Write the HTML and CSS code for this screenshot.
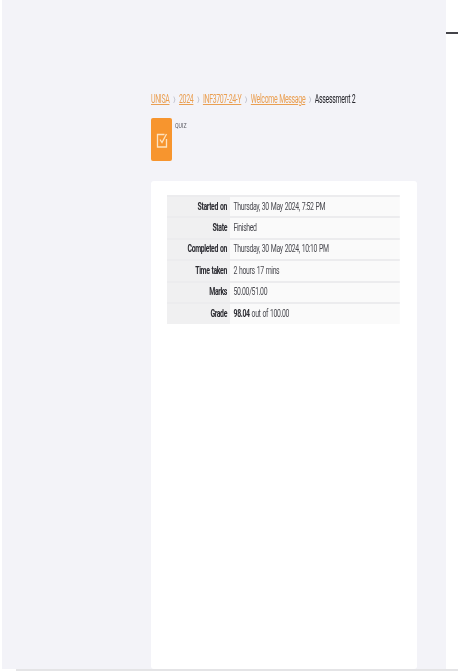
FILE: index.html
```html
<!DOCTYPE html>
<html lang="en">
<head>
    <meta charset="UTF-8">
    <meta name="viewport" content="width=device-width, initial-scale=1.0">
    <title>Assessment 2</title>
    <link rel="stylesheet" href="styles.css">
</head>
<body>
    <div class="shell">
        <div class="page">
            <nav class="breadcrumb">
                <a href="#">UNISA</a>
                <span class="sep">&#8250;</span>
                <a href="#">2024</a>
                <span class="sep">&#8250;</span>
                <a href="#">INF3707-24-Y</a>
                <span class="sep">&#8250;</span>
                <a href="#">Welcome Message</a>
                <span class="sep">&#8250;</span>
                <span class="current">Assessment 2</span>
            </nav>
            <div class="heading">
                <div class="quiz-icon">
                    <svg width="14" height="18" viewBox="0 0 14 18" fill="none" stroke="#fde3c0" stroke-width="1.3">
                        <path d="M11.5 8V16H2.5V3.5H9.5"/>
                        <path d="M5 8.5L7 11.5L11.5 3"/>
                    </svg>
                </div>
                <span class="quiz-label">QUIZ</span>
            </div>
            <div class="card">
                <table class="summary">
                    <tr><th>Started on</th><td>Thursday, 30 May 2024, 7:52 PM</td></tr>
                    <tr><th>State</th><td>Finished</td></tr>
                    <tr><th>Completed on</th><td>Thursday, 30 May 2024, 10:10 PM</td></tr>
                    <tr><th>Time taken</th><td>2 hours 17 mins</td></tr>
                    <tr><th>Marks</th><td>50.00/51.00</td></tr>
                    <tr><th>Grade</th><td><b>98.04</b> out of 100.00</td></tr>
                </table>
            </div>
        </div>
        <div class="side">
            <div class="dash"></div>
        </div>
    </div>
    <div class="bottom-bar"></div>
</body>
</html>
```

FILE: styles.css
```css
html, body {
    height: 100%;
}
body {
    margin: 0;
    background: white;
    font-family: Roboto, sans-serif;
    color: #33333a;
    display: flex;
    flex-direction: column;
    overflow: hidden;
}
.shell {
    flex: 1;
    display: flex;
    min-height: 0;
}
.page {
    width: 444px;
    margin-left: 2px;
    padding: 91px 29px 0 149px;
    box-sizing: border-box;
    background: #f3f3f8;
    display: flex;
    flex-direction: column;
}
.side {
    flex: 1;
    padding-top: 32px;
}
.dash {
    width: 12px;
    height: 1.5px;
    background: #44444a;
}
/* the text in the shot is squeezed sideways, so whole blocks get a scaleX */
.breadcrumb {
    display: flex;
    align-items: center;
    gap: 6.1px;
    height: 15px;
    font-size: 12px;
    letter-spacing: -0.55px;
    word-spacing: 0.5px;
    white-space: nowrap;
    transform: scaleX(0.58);
    transform-origin: left;
    filter: blur(0.3px);
}
.breadcrumb a {
    color: #ea9f52;
}
.breadcrumb .sep {
    color: #b9bcc8;
    font-size: 16px;
}
.breadcrumb .current {
    color: #26262c;
}
.heading {
    display: flex;
    gap: 3px;
    margin-top: 12px;
}
.quiz-icon {
    width: 21px;
    height: 43px;
    background: #f7952e;
    border-radius: 2px;
    display: flex;
    align-items: center;
    justify-content: center;
}
.quiz-label {
    font-size: 7px;
    color: #5a5a62;
    margin-top: 4px;
    transform: scaleX(0.75);
    transform-origin: left top;
}
.card {
    flex: 1;
    margin-top: 20px;
    padding: 14px 16px;
    background: white;
    border-radius: 3px;
}
.summary {
    width: 388px;
    table-layout: fixed;
    border-collapse: collapse;
    font-size: 11.5px;
    letter-spacing: -0.6px;
    word-spacing: 1px;
    transform: scaleX(0.6);
    transform-origin: left;
    filter: blur(0.3px);
}
.summary tr {
    height: 21.4px;
    border-top: 2px solid #ececee;
}
.summary th {
    width: 100px;
    padding: 0 5px 2px 0;
    text-align: right;
    background: #f0f0f1;
    color: #2c2c32;
    white-space: nowrap;
}
.summary td {
    padding: 0 0 2px 6px;
    background: #fafafa;
    color: #4a4a50;
    white-space: nowrap;
}
.summary td b {
    color: #2c2c32;
}
.bottom-bar {
    height: 2px;
    margin: 0 16px;
    background: #e4e4e6;
}
```
